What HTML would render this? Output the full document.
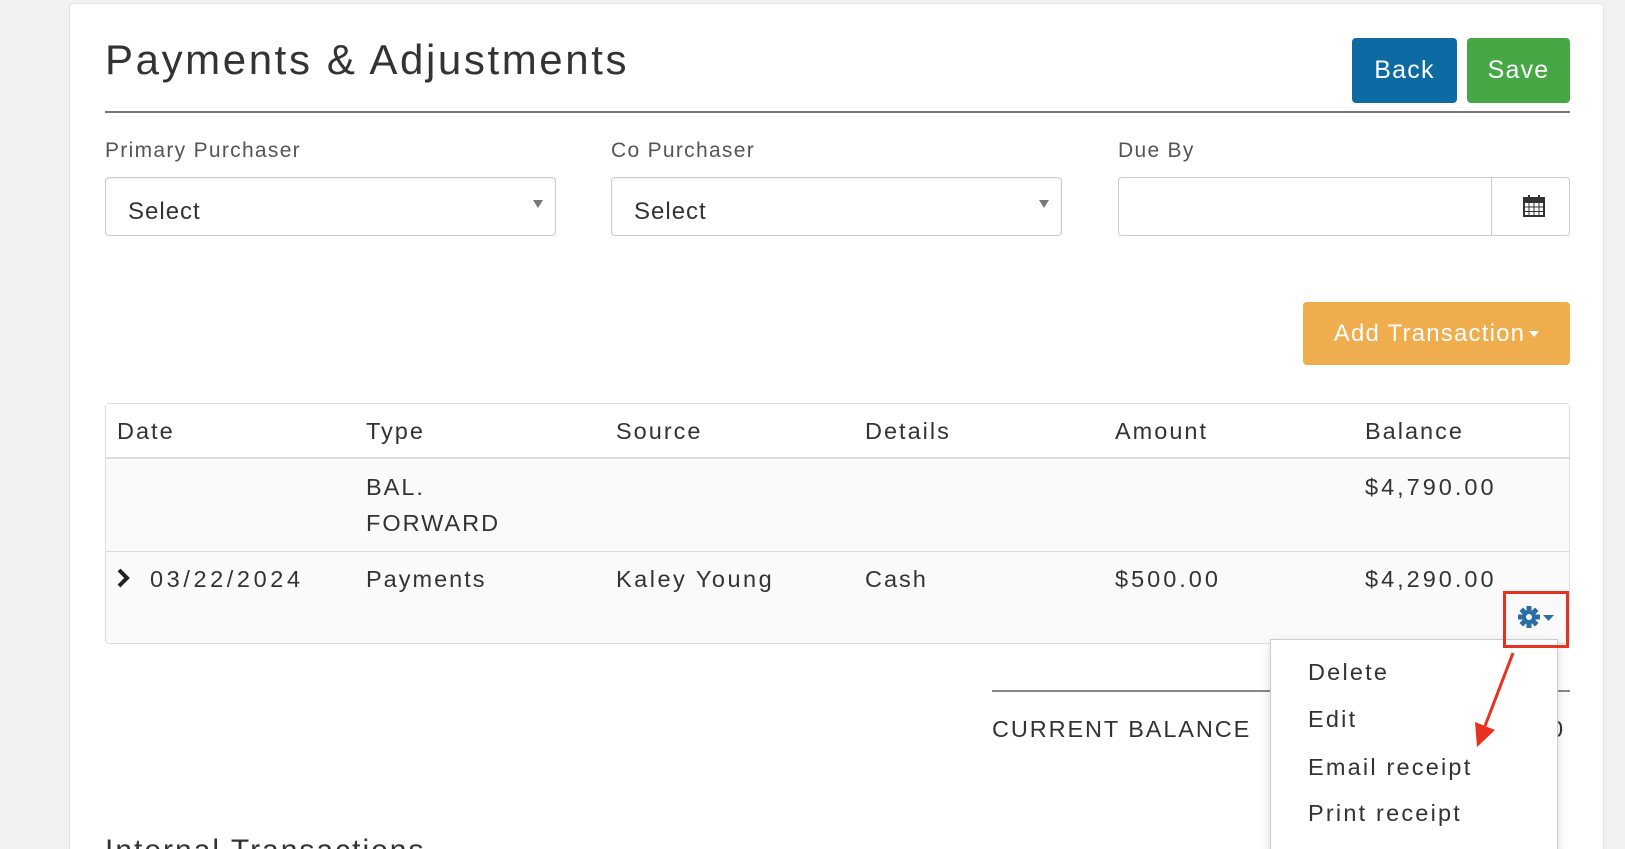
<!DOCTYPE html>
<html style="width:1625px;height:849px;overflow:hidden"><head><meta charset="utf-8"><style>
*{box-sizing:border-box;margin:0;padding:0}
body{width:1625px;height:849px;overflow:hidden;background:#f1f1f1;font-family:"Liberation Sans",sans-serif;color:#333;position:relative}
.card{position:absolute;left:69px;top:3px;width:1535px;height:846px;background:#fff;border:1px solid #e2e2e2;border-bottom:none;border-radius:4px 4px 0 0}
.a{position:absolute}
h1{position:absolute;left:105px;top:36px;font-size:42px;font-weight:normal;color:#333;letter-spacing:2.6px}
.btn{position:absolute;color:#fff;font-size:25px;border-radius:4px;display:flex;align-items:center;justify-content:center;letter-spacing:1.2px}
.lbl{position:absolute;top:139px;font-size:21px;color:#555;letter-spacing:1.3px}
.sel{position:absolute;top:177px;height:59px;border:1px solid #ccc;border-radius:4px;background:#fff;font-size:24px;padding:20px 0 0 22px;color:#333;box-shadow:inset 0 1px 2px rgba(0,0,0,.08);letter-spacing:1px}
.sel:after{content:"";position:absolute;right:12px;top:22px;border-left:5px solid transparent;border-right:5px solid transparent;border-top:8px solid #777}
.t{position:absolute;font-size:23.5px;color:#333;letter-spacing:2px}
.dd{position:absolute;font-size:23.5px;color:#333;left:1308px;letter-spacing:2.2px}
</style></head><body>
<div class="card"></div>
<h1>Payments &amp; Adjustments</h1>
<div class="btn" style="left:1352px;top:38px;width:105px;height:65px;background:#0e6aa3">Back</div>
<div class="btn" style="left:1467px;top:38px;width:103px;height:65px;background:#45a844">Save</div>
<div class="a" style="left:105px;top:111px;width:1465px;height:2px;background:#777"></div>
<div class="lbl" style="left:105px">Primary Purchaser</div>
<div class="lbl" style="left:611px">Co Purchaser</div>
<div class="lbl" style="left:1118px">Due By</div>
<div class="sel" style="left:105px;width:451px">Select</div>
<div class="sel" style="left:611px;width:451px">Select</div>
<div class="a" style="left:1118px;top:177px;width:452px;height:59px;border:1px solid #ccc;border-radius:4px"></div>
<div class="a" style="left:1491px;top:177px;width:1px;height:59px;background:#ccc"></div>
<svg class="a" style="left:1522px;top:194px" width="24" height="24" viewBox="0 0 24 24"><rect x="2" y="4" width="20" height="18" fill="none" stroke="#333" stroke-width="2"/><rect x="2" y="4" width="20" height="5" fill="#333"/><rect x="6" y="1" width="2" height="5" fill="#333"/><rect x="16" y="1" width="2" height="5" fill="#333"/><path d="M7 9v13M12 9v13M17 9v13M2 13h20M2 17.5h20" stroke="#333" stroke-width="1"/></svg>
<div class="btn" style="left:1303px;top:302px;width:267px;height:63px;background:#f0ad4e;font-size:24px">Add Transaction<span style="display:inline-block;margin-left:4px;border-left:5px solid transparent;border-right:5px solid transparent;border-top:6px solid #fff"></span></div>
<div class="a" style="left:105px;top:403px;width:1465px;height:241px;border:1px solid #ddd;border-radius:4px;background:#fafafa"></div>
<div class="a" style="left:106px;top:404px;width:1463px;height:55px;background:#fff;border-bottom:2px solid #ddd"></div>
<div class="a" style="left:105px;top:551px;width:1465px;height:1px;background:#ddd"></div>
<div class="t" style="left:117px;top:418px">Date</div><div class="t" style="left:366px;top:418px">Type</div><div class="t" style="left:616px;top:418px">Source</div><div class="t" style="left:865px;top:418px">Details</div><div class="t" style="left:1115px;top:418px">Amount</div><div class="t" style="left:1365px;top:418px">Balance</div>
<div class="t" style="left:366px;top:474px">BAL.</div><div class="t" style="left:366px;top:510px">FORWARD</div><div class="t" style="left:1365px;top:474px;letter-spacing:3px">$4,790.00</div>
<svg class="a" style="left:116px;top:567px" width="16" height="22" viewBox="0 0 16 22"><path d="M3 3l8 8-8 8" fill="none" stroke="#222" stroke-width="4"/></svg>
<div class="t" style="left:150px;top:566px;letter-spacing:3.6px">03/22/2024</div><div class="t" style="left:366px;top:566px">Payments</div><div class="t" style="left:616px;top:566px;letter-spacing:2.5px">Kaley Young</div><div class="t" style="left:865px;top:566px">Cash</div><div class="t" style="left:1115px;top:566px;letter-spacing:3px">$500.00</div><div class="t" style="left:1365px;top:566px;letter-spacing:3px">$4,290.00</div>
<div class="a" style="left:992px;top:690px;width:578px;height:2px;background:#888"></div>
<div class="t" style="left:992px;top:716px;letter-spacing:1.9px">CURRENT BALANCE</div><div class="t" style="left:1550px;top:716px">0</div>
<div class="t" style="left:105px;top:834px;font-size:30px">Internal Transactions</div>
<div class="a" style="left:1270px;top:639px;width:288px;height:215px;background:#fff;border:1px solid #ccc;box-shadow:0 4px 10px rgba(0,0,0,.15)"></div>
<div class="dd" style="top:659px">Delete</div><div class="dd" style="top:706px">Edit</div><div class="dd" style="top:754px">Email receipt</div><div class="dd" style="top:800px">Print receipt</div>
<div class="a" style="left:1503px;top:591px;width:66px;height:57px;border:3px solid #e8321f"></div>
<svg class="a" style="left:1518px;top:605px" width="42" height="24" viewBox="0 0 42 24"><g transform="translate(11,12)" fill="#2d6da3"><circle r="7"/><rect x="-2.5" y="-11" width="5" height="22"/><rect x="-2.5" y="-11" width="5" height="22" transform="rotate(45)"/><rect x="-2.5" y="-11" width="5" height="22" transform="rotate(90)"/><rect x="-2.5" y="-11" width="5" height="22" transform="rotate(135)"/><circle r="3" fill="#fafafa"/></g><path d="M25 10h11l-5.5 6z" fill="#2d6da3"/></svg>
<svg class="a" style="left:1465px;top:648px" width="60" height="105" viewBox="0 0 60 105"><path d="M48 5L20 78" stroke="#e8321f" stroke-width="3"/><path d="M10 74l20 8-18 17z" fill="#e8321f"/></svg>
</body></html>
